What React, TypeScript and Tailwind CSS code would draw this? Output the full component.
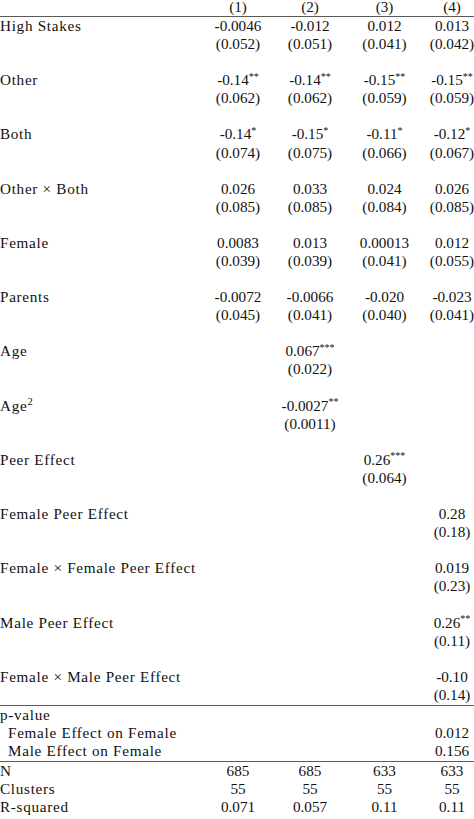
import React from "react";

type V = [string, string, string] | null; // value, stars, se

const blocks: { label: React.ReactNode; cells: V[] }[] = [
  { label: "High Stakes", cells: [["-0.0046", "", "(0.052)"], ["-0.012", "", "(0.051)"], ["0.012", "", "(0.041)"], ["0.013", "", "(0.042)"]] },
  { label: "Other", cells: [["-0.14", "**", "(0.062)"], ["-0.14", "**", "(0.062)"], ["-0.15", "**", "(0.059)"], ["-0.15", "**", "(0.059)"]] },
  { label: "Both", cells: [["-0.14", "*", "(0.074)"], ["-0.15", "*", "(0.075)"], ["-0.11", "*", "(0.066)"], ["-0.12", "*", "(0.067)"]] },
  { label: "Other \u00d7 Both", cells: [["0.026", "", "(0.085)"], ["0.033", "", "(0.085)"], ["0.024", "", "(0.084)"], ["0.026", "", "(0.085)"]] },
  { label: "Female", cells: [["0.0083", "", "(0.039)"], ["0.013", "", "(0.039)"], ["0.00013", "", "(0.041)"], ["0.012", "", "(0.055)"]] },
  { label: "Parents", cells: [["-0.0072", "", "(0.045)"], ["-0.0066", "", "(0.041)"], ["-0.020", "", "(0.040)"], ["-0.023", "", "(0.041)"]] },
  { label: "Age", cells: [null, ["0.067", "***", "(0.022)"], null, null] },
  { label: <>Age<sup className="text-[10.5px] tracking-normal">2</sup></>, cells: [null, ["-0.0027", "**", "(0.0011)"], null, null] },
  { label: "Peer Effect", cells: [null, null, ["0.26", "***", "(0.064)"], null] },
  { label: "Female Peer Effect", cells: [null, null, null, ["0.28", "", "(0.18)"]] },
  { label: "Female \u00d7 Female Peer Effect", cells: [null, null, null, ["0.019", "", "(0.23)"]] },
  { label: "Male Peer Effect", cells: [null, null, null, ["0.26", "**", "(0.11)"]] },
  { label: "Female \u00d7 Male Peer Effect", cells: [null, null, null, ["-0.10", "", "(0.14)"]] },
];

function Line({ label, cells, indent, header }: { label?: React.ReactNode; cells: React.ReactNode[]; indent?: boolean; header?: boolean }) {
  return (
    <div
      className={
        "grid grid-cols-[202px_72px_72px_77px_58px] " +
        (header ? "h-[16px] leading-[14px]" : "h-[18.08px] leading-[18.08px]")
      }
    >
      <div className={"tracking-[0.7px] " + (indent ? "pl-[8px]" : "")}>{label}</div>
      {cells.map((c, i) => (
        <div key={i} className="text-center">{c}</div>
      ))}
    </div>
  );
}

function Star({ s }: { s: string }) {
  if (!s) return null;
  return <sup className="text-[10px] top-[-0.55em]">{s}</sup>;
}

function Rule() {
  return <div className="h-px bg-[#5a5a5a] w-[480px]" />;
}

export default function App() {
  return (
    <div className="w-[474px] h-[819px] overflow-hidden bg-white text-[#111111] font-['Liberation_Serif',serif] text-[15.2px] whitespace-nowrap">
      <div className="w-[480px]">
        <Line header cells={["(1)", "(2)", "(3)", "(4)"]} />
        <Rule />
        {blocks.map((b, bi) => (
          <div key={bi}>
            <Line
              label={b.label}
              cells={b.cells.map((c) => (c ? <>{c[0]}<Star s={c[1]} /></> : ""))}
            />
            <Line cells={b.cells.map((c) => (c ? c[2] : ""))} />
            {bi < blocks.length - 1 && <div className="h-[18.08px]" />}
          </div>
        ))}
        <div className="h-[1px]" />
        <Rule />
        <Line label="p-value" cells={["", "", "", ""]} />
        <Line label="Female Effect on Female" indent cells={["", "", "", "0.012"]} />
        <Line label="Male Effect on Female" indent cells={["", "", "", "0.156"]} />
        <div className="h-[1px]" />
        <Rule />
        <Line label="N" cells={["685", "685", "633", "633"]} />
        <Line label="Clusters" cells={["55", "55", "55", "55"]} />
        <Line label="R-squared" cells={["0.071", "0.057", "0.11", "0.11"]} />
      </div>
    </div>
  );
}
